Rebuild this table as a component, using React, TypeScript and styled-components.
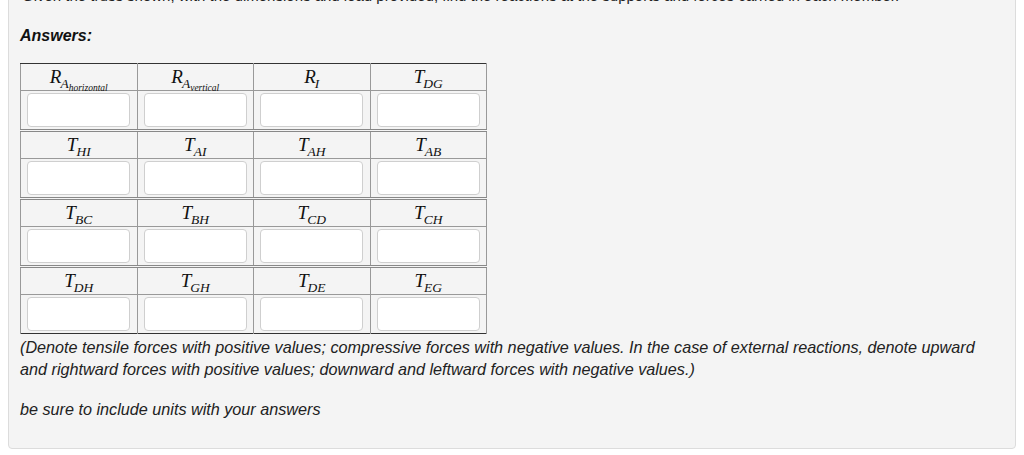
import React from "react";
import styled, { createGlobalStyle } from "styled-components";

const Global = createGlobalStyle`
  html, body { margin: 0; padding: 0; background: #ffffff; }
  body { font-family: "Liberation Sans", Arial, sans-serif; color: #222; }
`;

const Page = styled.div`
  padding: 0 8px 8px 8px;
  margin-top: -29px;
`;

const Panel = styled.div`
  background: #f4f4f4;
  border: 1px solid #dcdcdc;
  border-radius: 4px;
  padding: 14px 11px 28px 11px;
`;

const Intro = styled.p`
  margin: 0;
  font-size: 15px;
  line-height: 20px;
  padding-left: 2px;
`;

const Heading = styled.h3`
  margin: 20px 0 17px 0;
  font-size: 16px;
  font-weight: bold;
  font-style: italic;
  line-height: 20px;
  color: #111;
`;

const Table = styled.table`
  border-collapse: collapse;
  border: 1px solid #333;
  table-layout: fixed;
  width: 467px;
`;

const HeadCell = styled.td<{ $first?: boolean }>`
  border-left: 1px solid #999;
  border-right: 1px solid #999;
  border-top: ${(p) => (p.$first ? "1px solid #333" : "3px double #888")};
  border-bottom: 1px solid #999;
  height: 26px;
  padding: 0;
  text-align: center;
  vertical-align: middle;
  font-family: "Liberation Serif", "Times New Roman", serif;
  font-style: italic;
  font-size: 19px;
  color: #111;
  line-height: 20px;
`;

const InputCell = styled.td`
  border-left: 1px solid #999;
  border-right: 1px solid #999;
  height: 38px;
  padding: 0 6px;
  vertical-align: middle;
`;

const Field = styled.input`
  display: block;
  box-sizing: border-box;
  width: 103px;
  height: 34px;
  border: 1px solid #cfcfcf;
  border-radius: 4px;
  background: #fff;
  margin: 0;
  padding: 0 6px;
`;

const Sub = styled.sub`
  font-size: 13.5px;
  vertical-align: -5px;
  line-height: 0;
  margin-left: -1px;
`;

const SubSub = styled.sub`
  font-size: 9.5px;
  vertical-align: -3px;
  line-height: 0;
`;

const Note = styled.p`
  margin: 2px 0 0 0;
  font-size: 16.2px;
  font-style: italic;
  line-height: 22px;
  color: #222;
`;

const Units = styled.p`
  margin: 18px 0 0 0;
  font-size: 16.2px;
  font-style: italic;
  line-height: 22px;
  color: #222;
`;

type Label = { main: string; sub: string; subsub?: string };

const groups: Label[][] = [
  [
    { main: "R", sub: "A", subsub: "horizontal" },
    { main: "R", sub: "A", subsub: "vertical" },
    { main: "R", sub: "I" },
    { main: "T", sub: "DG" },
  ],
  [
    { main: "T", sub: "HI" },
    { main: "T", sub: "AI" },
    { main: "T", sub: "AH" },
    { main: "T", sub: "AB" },
  ],
  [
    { main: "T", sub: "BC" },
    { main: "T", sub: "BH" },
    { main: "T", sub: "CD" },
    { main: "T", sub: "CH" },
  ],
  [
    { main: "T", sub: "DH" },
    { main: "T", sub: "GH" },
    { main: "T", sub: "DE" },
    { main: "T", sub: "EG" },
  ],
];

function MathLabel({ l }: { l: Label }) {
  return (
    <span>
      {l.main}
      <Sub>
        {l.sub}
        {l.subsub && <SubSub>{l.subsub}</SubSub>}
      </Sub>
    </span>
  );
}

export default function App() {
  return (
    <>
      <Global />
      <Page>
        <Panel>
          <Intro>
            Given the truss shown, with the dimensions and load provided, find the reactions at the supports and forces carried in each member.
          </Intro>
          <Heading>Answers:</Heading>
          <Table>
            <tbody>
              {groups.map((g, gi) => (
                <React.Fragment key={gi}>
                  <tr>
                    {g.map((l, i) => (
                      <HeadCell key={i} $first={gi === 0}>
                        <MathLabel l={l} />
                      </HeadCell>
                    ))}
                  </tr>
                  <tr>
                    {g.map((_, i) => (
                      <InputCell key={i}>
                        <Field type="text" />
                      </InputCell>
                    ))}
                  </tr>
                </React.Fragment>
              ))}
            </tbody>
          </Table>
          <Note>
            (Denote tensile forces with positive values; compressive forces with negative values. In the case of external reactions, denote upward and rightward forces with positive values; downward and leftward forces with negative values.)
          </Note>
          <Units>be sure to include units with your answers</Units>
        </Panel>
      </Page>
    </>
  );
}
